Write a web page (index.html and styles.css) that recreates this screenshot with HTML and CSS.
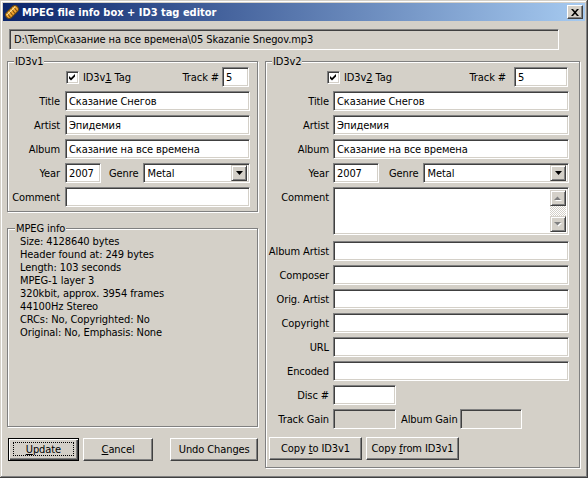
FILE: index.html
```html
<!DOCTYPE html>
<html>
<head>
<meta charset="utf-8">
<title>MPEG file info box + ID3 tag editor</title>
<link rel="stylesheet" href="styles.css">
</head>
<body>
<div class="window">
  <div class="titlebar">
    <svg class="app-icon" width="16" height="16" viewBox="0 0 16 16">
      <g transform="rotate(-45 8 8)">
        <rect x="0.5" y="4.5" width="15" height="7" rx="3.5" fill="#f2a531" stroke="#6b4a12"/>
        <path d="M4 5 L3 11 M7 5 L6 11 M10 5 L9 11 M13 5 L12 11" stroke="#7a5010" stroke-width="1"/>
        <path d="M2 6.5 H14" stroke="#ffe6a0" stroke-width="1"/>
      </g>
    </svg>
    <span class="title">MPEG file info box + ID3 tag editor</span>
    <div class="close"><svg width="8" height="7" viewBox="0 0 8 7"><path d="M0 0 H2 L4 2.3 L6 0 H8 L5 3.5 L8 7 H6 L4 4.7 L2 7 H0 L3 3.5 Z" fill="#000"/></svg></div>
  </div>
  <div class="client">
    <div class="path">D:\Temp\Сказание на все времена\05 Skazanie Snegov.mp3</div>
    <div class="columns">
      <div class="col-left">
        <div class="group g1">
          <div class="group-title">ID3v1</div>
          <div class="form">
            <div class="row-top">
              <span class="checkbox"><svg width="7" height="7" viewBox="0 0 7 7"><path d="M0 2 L2 4 L6 0 L6 2.6 L2 6.6 L0 4.6 Z" fill="#000"/></svg></span>
              <span class="cb-label">ID3v<u>1</u> Tag</span>
              <span class="track-label">Track #</span>
              <div class="field track">5</div>
            </div>
            <label class="lbl">Title</label><div class="field">Сказание Снегов</div>
            <label class="lbl">Artist</label><div class="field">Эпидемия</div>
            <label class="lbl">Album</label><div class="field">Сказание на все времена</div>
            <label class="lbl">Year</label>
            <div class="year-row">
              <div class="field year">2007</div>
              <span class="genre-label">Genre</span>
              <div class="field combo"><span class="combo-text">Metal</span><span class="drop"><svg width="7" height="4" viewBox="0 0 7 4"><path d="M0 0 H7 L3.5 4 Z" fill="#000"/></svg></span></div>
            </div>
            <label class="lbl">Comment</label><div class="field"></div>
          </div>
        </div>
        <div class="group info">
          <div class="group-title">MPEG info</div>
          <div class="info-lines">
            <div>Size: 4128640 bytes</div>
            <div>Header found at: 249 bytes</div>
            <div>Length: 103 seconds</div>
            <div>MPEG-1 layer 3</div>
            <div>320kbit, approx. 3954 frames</div>
            <div>44100Hz Stereo</div>
            <div>CRCs: No, Copyrighted: No</div>
            <div>Original: No, Emphasis: None</div>
          </div>
        </div>
        <div class="btn-row">
          <div class="btn default"><span class="focus"><span><u>U</u>pdate</span></span></div>
          <div class="btn cancel"><span><u>C</u>ancel</span></div>
          <div class="btn undo"><span>Undo Changes</span></div>
        </div>
      </div>
      <div class="group g2">
        <div class="group-title">ID3v2</div>
        <div class="form">
          <div class="row-top">
            <span class="checkbox"><svg width="7" height="7" viewBox="0 0 7 7"><path d="M0 2 L2 4 L6 0 L6 2.6 L2 6.6 L0 4.6 Z" fill="#000"/></svg></span>
            <span class="cb-label">ID3v<u>2</u> Tag</span>
            <span class="track-label">Track #</span>
            <div class="field track">5</div>
          </div>
          <label class="lbl">Title</label><div class="field">Сказание Снегов</div>
          <label class="lbl">Artist</label><div class="field">Эпидемия</div>
          <label class="lbl">Album</label><div class="field">Сказание на все времена</div>
          <label class="lbl">Year</label>
          <div class="year-row">
            <div class="field year">2007</div>
            <span class="genre-label">Genre</span>
            <div class="field combo"><span class="combo-text">Metal</span><span class="drop"><svg width="7" height="4" viewBox="0 0 7 4"><path d="M0 0 H7 L3.5 4 Z" fill="#000"/></svg></span></div>
          </div>
          <label class="lbl top">Comment</label>
          <div class="field memo">
            <div class="memo-text"></div>
            <div class="scrollbar">
              <span class="sbtn"><svg width="8" height="5" viewBox="0 0 8 5"><path d="M1 5 H8 L4.5 1.5 Z" fill="#fff"/><path d="M0 4 H7 L3.5 0.5 Z" fill="#808080"/></svg></span>
              <span class="strack"></span>
              <span class="sbtn"><svg width="8" height="5" viewBox="0 0 8 5"><path d="M1 1 H8 L4.5 4.5 Z" fill="#fff"/><path d="M0 0 H7 L3.5 3.5 Z" fill="#808080"/></svg></span>
            </div>
          </div>
          <label class="lbl">Album Artist</label><div class="field"></div>
          <label class="lbl">Composer</label><div class="field"></div>
          <label class="lbl">Orig. Artist</label><div class="field"></div>
          <label class="lbl">Copyright</label><div class="field"></div>
          <label class="lbl">URL</label><div class="field"></div>
          <label class="lbl">Encoded</label><div class="field"></div>
          <label class="lbl">Disc #</label><div class="field disc"></div>
          <label class="lbl">Track Gain</label>
          <div class="gain-row">
            <div class="field gain disabled"></div>
            <span class="gain-label">Album Gain</span>
            <div class="field gain disabled"></div>
          </div>
        </div>
        <div class="btn-row2">
          <div class="btn copy"><span>Copy <u>t</u>o ID3v1</span></div>
          <div class="btn copy"><span>Copy <u>f</u>rom ID3v1</span></div>
        </div>
      </div>
    </div>
  </div>
</div>
</body>
</html>
```
FILE: styles.css
```css
* { box-sizing: border-box; }
html, body { margin: 0; padding: 0; }
body {
  width: 588px; height: 478px; overflow: hidden;
  background: #d4d0c8;
  font-family: "DejaVu Sans Condensed", "DejaVu Sans", sans-serif;
  font-size: 11px; color: #000;
  letter-spacing: -0.1px;
}
u { text-decoration: underline; text-underline-offset: 1px; }

.window {
  width: 588px; height: 478px;
  background: #d4d0c8;
  padding: 3px;
  box-shadow: inset -1px -1px #404040, inset 1px 1px #d4d0c8,
              inset -2px -2px #808080, inset 2px 2px #fff;
  display: flex; flex-direction: column;
}
.titlebar {
  height: 18px; flex: none;
  background: linear-gradient(to right, #0a246a, #a6caf0);
  display: flex; align-items: center;
  padding-left: 1px;
  color: #fff; font-weight: bold; letter-spacing: 0;
}
.app-icon { flex: none; }
.title { margin-left: 2px; white-space: nowrap; }
.close {
  margin-left: auto; margin-right: 2px;
  width: 16px; height: 14px;
  background: #d4d0c8;
  border: 1px solid; border-color: #fff #404040 #404040 #fff;
  box-shadow: inset -1px -1px #808080;
  display: flex; align-items: center; justify-content: center;
}
.close svg { margin-left: -1px; }

.client { padding: 0 4px; flex: 1; display: flex; flex-direction: column; }
.path {
  margin: 8px 0 0 2px;
  width: 550px; height: 21px;
  border: 1px solid; border-color: #808080 #fff #fff #808080;
  box-shadow: inset 1px 1px #404040, inset -1px -1px #d4d0c8;
  padding-left: 4px;
  display: flex; align-items: center; white-space: nowrap;
}
.columns { margin-top: 11px; display: flex; gap: 7px; align-items: flex-start; }
.col-left { width: 251px; display: flex; flex-direction: column; }

.group {
  border: 1px solid #808080;
  box-shadow: inset 1px 1px #fff, 1px 1px #fff;
}
.group-title {
  width: fit-content;
  margin: -12px 0 -1px 6px;
  padding: 0 1px;
  line-height: 13px; height: 13px;
  background: #d4d0c8;
}
.g1 { width: 251px; height: 151px; padding: 5px 7px 4px 0; }
.g2 { width: 315px; height: 407px; padding: 5px 10px 0 0; }

.form { display: grid; row-gap: 4px; grid-auto-rows: 20px; }
.g1 .form { grid-template-columns: 52px 185px; column-gap: 5px; }
.g2 .form { grid-template-columns: 63px 236px; column-gap: 4px; }

.lbl { display: flex; align-items: center; justify-content: flex-end; white-space: nowrap; }
.lbl.top { align-items: flex-start; padding-top: 4px; }

.field {
  height: 20px; background: #fff;
  border: 1px solid; border-color: #808080 #fff #fff #808080;
  box-shadow: inset 1px 1px #404040, inset -1px -1px #d4d0c8;
  padding-left: 3px;
  display: flex; align-items: center; white-space: nowrap; overflow: hidden;
}
.field.disabled { background: #d4d0c8; }

.row-top { grid-column: 1 / -1; display: flex; align-items: center; }
.g1 .row-top { padding-left: 58px; }
.g2 .row-top { padding-left: 61px; }
.checkbox {
  width: 13px; height: 13px; background: #fff; flex: none;
  border: 1px solid; border-color: #808080 #fff #fff #808080;
  box-shadow: inset 1px 1px #404040, inset -1px -1px #d4d0c8;
  display: flex; align-items: center; justify-content: center;
}
.cb-label { margin-left: 4px; }
.track-label { margin-left: auto; }
.field.track { margin-right: 1px; }
.g1 .track-label { margin-right: 3px; }
.g1 .field.track { width: 27px; }
.g2 .track-label { margin-right: 8px; }
.g2 .field.track { width: 54px; }

.year-row { display: flex; align-items: center; }
.g1 .field.year { width: 36px; }
.g1 .genre-label { margin: 0 5px 0 8px; }
.g2 .field.year { width: 46px; }
.g2 .genre-label { margin: 0 5px 0 10px; }
.field.combo { flex: 1; padding-right: 2px; }
.combo-text { flex: 1; }
.drop {
  width: 16px; height: 16px; background: #d4d0c8; flex: none;
  border: 1px solid; border-color: #d4d0c8 #404040 #404040 #d4d0c8;
  box-shadow: inset 1px 1px #fff, inset -1px -1px #808080;
  display: flex; align-items: center; justify-content: center;
}

.field.memo {
  height: 48px; align-self: start;
  padding: 2px 2px 2px 0; align-items: stretch;
}
.g2 .form { grid-template-rows: repeat(5, 20px) 50px; }
.memo-text { flex: 1; }
.scrollbar { width: 16px; display: flex; flex-direction: column; }
.sbtn {
  width: 16px; height: 16px; flex: none; background: #d4d0c8;
  border: 1px solid; border-color: #d4d0c8 #404040 #404040 #d4d0c8;
  box-shadow: inset 1px 1px #fff, inset -1px -1px #808080;
  display: flex; align-items: center; justify-content: center;
}
.strack {
  flex: 1;
  background: repeating-conic-gradient(#fff 0 25%, #d4d0c8 0 50%) 0 0 / 2px 2px;
}
.field.disc { width: 63px; }
.gain-row { display: flex; align-items: center; }
.field.gain { width: 63px; }
.field.gain + .gain-label + .field.gain { width: 62px; }
.gain-label { width: 54px; margin: 0 5px 0 5px; white-space: nowrap; }

.info { height: 199px; margin-top: 16px; padding: 5px 0 0 0; }
.info .group-title { margin-left: 7px; }
.info-lines { line-height: 13px; padding: 1px 0 0 12px; }

.btn {
  height: 23px; background: #d4d0c8;
  border: 1px solid; border-color: #fff #404040 #404040 #fff;
  box-shadow: inset -1px -1px #808080;
  display: flex; align-items: center; justify-content: center;
  white-space: nowrap;
}
.btn-row { display: flex; margin: 11px 0 0 1px; }
.btn.default {
  width: 71px; border: 1px solid #000;
  box-shadow: inset 1px 1px #fff, inset -1px -1px #404040, inset -2px -2px #808080;
  padding: 3px 4px 4px 4px; align-items: stretch;
}
.focus {
  flex: 1; border: 1px dotted #000;
  display: flex; align-items: center; justify-content: center;
}
.btn.cancel { width: 71px; margin-left: 4px; }
.btn.undo { width: 88px; margin-left: 17px; }
.btn-row2 { display: flex; gap: 4px; margin: 8px 0 0 3px; }
.btn.copy { width: 93px; }
```
